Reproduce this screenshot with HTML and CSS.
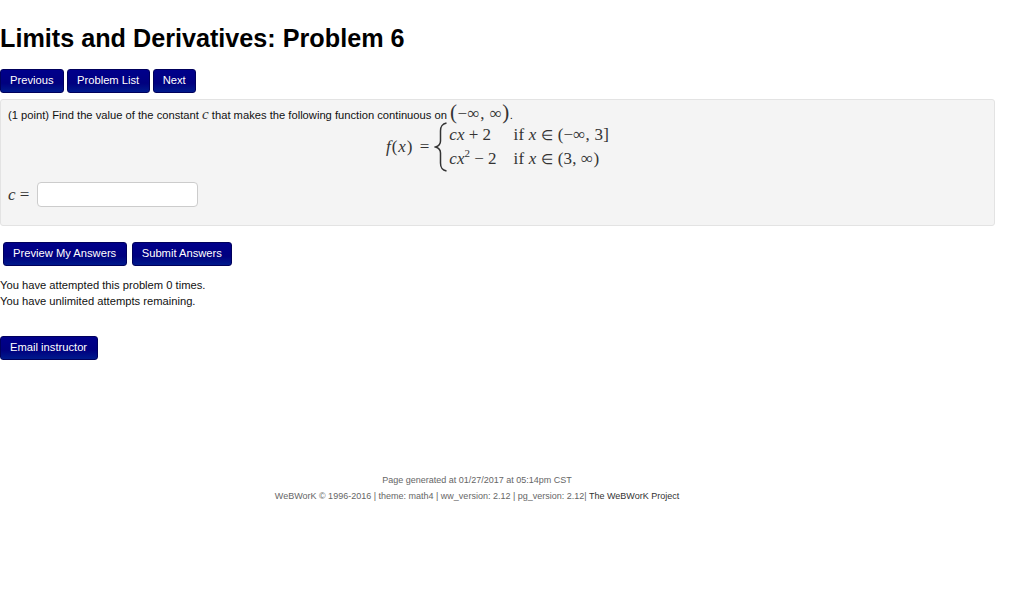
FILE: index.html
```html
<!DOCTYPE html>
<html lang="en">
  <head>
    <meta charset="UTF-8" />
    <title>Limits and Derivatives: Problem 6</title>
    <link rel="stylesheet" href="styles.css">
  </head>
  <body>
    <h1>Limits and Derivatives: Problem 6</h1>
    <div class="nav-buttons">
      <a class="btn">Previous</a>
      <a class="btn">Problem List</a>
      <a class="btn">Next</a>
    </div>
    <div class="problem">
      <p class="statement">(1 point) Find the value of the constant <i class="math inline-var">c</i> that makes the following function continuous on <span class="math inline-interval"><span class="big-paren">(</span>−∞, ∞<span class="big-paren">)</span></span>.</p>
      <div class="display-math math">
        <span class="lhs"><i>f</i>(<i>x</i>) =</span>
        <svg class="brace" width="14" height="50" viewBox="0 0 14 50">
          <path d="M12.5 1C8 2 6.5 4 6.5 9V19C6.5 22 5 24 1.5 25C5 26 6.5 28 6.5 31V41C6.5 46 8 48 12.5 49" fill="none" stroke="#333" stroke-width="1.5"/>
        </svg>
        <div class="cases">
          <span><i>cx</i> + 2</span>
          <span class="condition">if <i>x</i> <span class="elem">∈</span> (−∞, 3]</span>
          <span><i>cx</i><sup>2</sup> − 2</span>
          <span class="condition">if <i>x</i> <span class="elem">∈</span> (3, ∞)</span>
        </div>
      </div>
      <div class="answer-row">
        <span class="math answer-label"><i>c</i> =</span>
        <input type="text" class="answer" />
      </div>
    </div>
    <div class="submit-buttons">
      <a class="btn">Preview My Answers</a>
      <a class="btn">Submit Answers</a>
    </div>
    <p class="attempts">You have attempted this problem 0 times.<br />You have unlimited attempts remaining.</p>
    <a class="btn email">Email instructor</a>
    <div class="footer">
      <p>Page generated at 01/27/2017 at 05:14pm CST</p>
      <p>WeBWorK © 1996-2016 | theme: math4 | ww_version: 2.12 | pg_version: 2.12| <span class="project">The WeBWorK Project</span></p>
    </div>
  </body>
</html>
```
FILE: styles.css
```css
/* page */
body {
  margin: 0;
  padding: 0;
  background-color: #fff;
  color: #111;
  font-family: "Liberation Sans", Arial, sans-serif;
  font-size: 11.2px;
  line-height: 16px;
}

h1 {
  margin: 0;
  padding-top: 22px;
  font-size: 25.2px;
  line-height: 32px;
  color: #000;
}

/* buttons */
.btn {
  display: inline-block;
  box-sizing: border-box;
  height: 24px;
  padding: 0 9.5px 0 9px;
  line-height: 21px;
  color: #fff;
  background: linear-gradient(#00008b, #00007f 60%, #001a8c);
  border: 1px solid #00005c;
  border-radius: 3px;
}

.nav-buttons {
  display: flex;
  gap: 3px;
  margin-top: 15px;
}

.submit-buttons {
  display: flex;
  gap: 5px;
  margin: 16px 0 0 3px;
}

/* problem box */
.problem {
  box-sizing: border-box;
  width: 995px;
  height: 127px;
  margin-top: 6px;
  padding: 5px 7px;
  background-color: #f4f4f4;
  border: 1px solid #e3e3e3;
  border-radius: 3px;
}

.statement {
  margin: 0;
  line-height: 14px;
}

.math {
  font-family: "Liberation Serif", "Times New Roman", serif;
  color: #333;
}

.statement .inline-var {
  font-size: 15px;
}

.statement .inline-interval {
  font-size: 17px;
  letter-spacing: 0.5px;
}

.big-paren {
  font-size: 21px;
  line-height: 14px;
}

.display-math {
  display: flex;
  justify-content: center;
  align-items: center;
  height: 50px;
  font-size: 17px;
}

.lhs {
  margin-right: 4px;
  letter-spacing: 1px;
  word-spacing: 1px;
}

.brace {
  flex: none;
}

.cases {
  display: grid;
  grid-template-columns: auto auto;
  column-gap: 17px;
  row-gap: 3px;
  margin-left: 1px;
  line-height: 20px;
}

.condition {
  letter-spacing: 0.2px;
}

.cases sup {
  font-size: 11px;
  line-height: 0;
}

.elem {
  font-size: 14px;
}

.answer-row {
  display: flex;
  align-items: center;
  gap: 8px;
  margin-top: 10px;
}

.answer-label {
  font-size: 17px;
}

.answer {
  box-sizing: border-box;
  width: 161px;
  height: 25px;
  padding: 0 6px;
  background-color: #fff;
  border: 1px solid #ccc;
  border-radius: 4px;
}

/* below the box */
.attempts {
  margin: 11px 0 0;
}

.email {
  margin-top: 27px;
}

.footer {
  width: 954px;
  margin-top: 112px;
  font-size: 9px;
  text-align: center;
  color: #666;
}

.footer p {
  margin: 0;
}

.project {
  color: #333;
}
```
